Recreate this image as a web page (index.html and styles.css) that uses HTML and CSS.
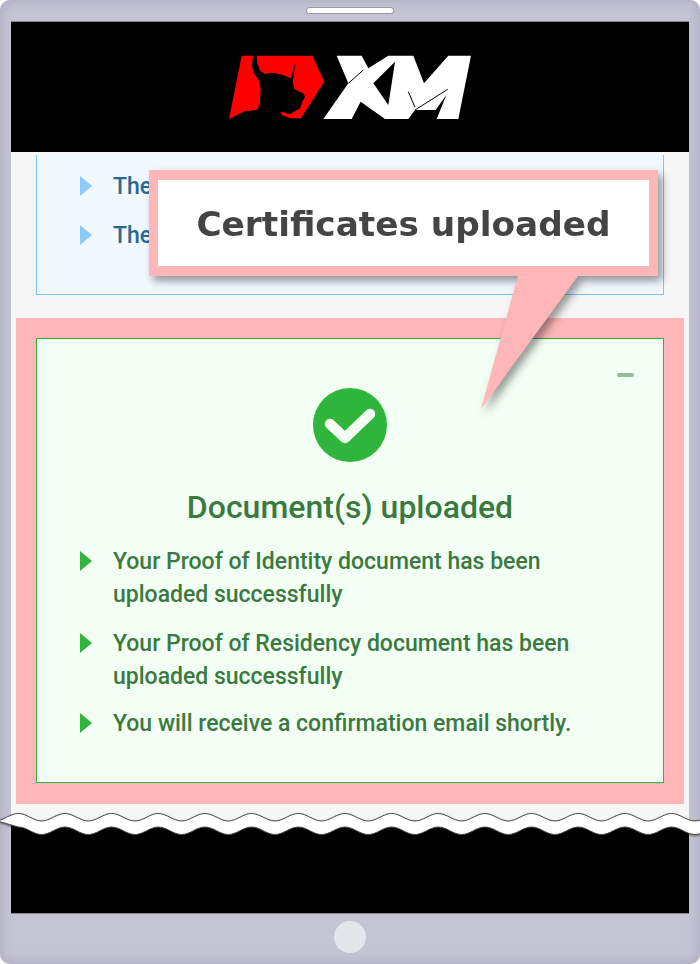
FILE: index.html

```html
<!DOCTYPE html>
<html lang="en">
<head>
  <meta charset="UTF-8">
  <meta name="viewport" content="width=device-width, initial-scale=1.0">
  <title>XM - Certificates uploaded</title>
  <link rel="stylesheet" href="styles.css">
</head>
<body>
  <div class="device">
    <div class="device-top"><span class="slot"></span></div>

    <div class="screen">
      <header class="site-header">
        <svg class="logo" viewBox="0 0 753 222" width="251" height="74">
          <!-- bull -->
          <path fill="#ff0000" d="M50 17L85 17L80 45L85 65L100 90L107 115L105 160L98 178L80 182L62 182L12 207Z"/>
          <path fill="#ff0000" d="M95 17L262 17L298 95L228 205L195 205L170 195L166 185L195 192L225 175L232 155L240 140L235 130L208 118L203 95L212 38L205 55L198 85L165 72L140 68L120 72L105 62L97 40Z"/>
          <!-- XM -->
          <path fill="#fff" d="M335 17L410 17L430 55L490 17L565 17L597 100L670 17L738 17L700 207L635 207L664 135L632 180L570 180L550 207L480 207L407 155L380 207L295 207L370 100Z"/>
          <path fill="#000" d="M510 35L490 165L445 100Z"/>
          <path stroke="#000" stroke-width="3" fill="none" d="M415 60L370 100M570 180L668 118M550 125L570 172"/>
        </svg>
      </header>

      <main class="content">
        <div class="notice notice-blue">
          <ul class="bullets">
            <li>The</li>
            <li>The</li>
          </ul>
        </div>

        <div class="highlight">
          <div class="notice notice-green">
            <span class="collapse"></span>
            <svg class="check" viewBox="0 0 74 74" width="74" height="74">
              <circle cx="37" cy="37" r="37" fill="#2fb53b"/>
              <path d="M17 36L32 50L57 26" fill="none" stroke="#f3fff5" stroke-width="10.5" stroke-linecap="round" stroke-linejoin="round"/>
            </svg>
            <h2>Document(s) uploaded</h2>
            <ul class="bullets">
              <li>Your Proof of Identity document has been uploaded successfully</li>
              <li>Your Proof of Residency document has been uploaded successfully</li>
              <li>You will receive a confirmation email shortly.</li>
            </ul>
          </div>
        </div>
      </main>

      <div class="screen-bottom"></div>

      <div class="callout">
        <div class="callout-box">Certificates uploaded</div>
        <svg class="callout-tail" viewBox="0 0 97 133" width="97" height="133">
          <path d="M37 0L97 0L0 133Z" fill="#ffb6b9"/>
        </svg>
      </div>
    </div>

    <div class="device-bottom"><span class="home-btn"></span></div>

    <svg class="tear" viewBox="0 0 700 30" width="700" height="30">
      <path d="M-28.33 5.5c8 0 15 7.5 23.33 7.5s15-7.5 23.33-7.5s15 7.5 23.33 7.5s15-7.5 23.33-7.5s15 7.5 23.33 7.5s15-7.5 23.33-7.5s15 7.5 23.33 7.5s15-7.5 23.33-7.5s15 7.5 23.33 7.5s15-7.5 23.33-7.5s15 7.5 23.33 7.5s15-7.5 23.33-7.5s15 7.5 23.33 7.5s15-7.5 23.33-7.5s15 7.5 23.33 7.5s15-7.5 23.33-7.5s15 7.5 23.33 7.5s15-7.5 23.33-7.5s15 7.5 23.33 7.5s15-7.5 23.33-7.5s15 7.5 23.33 7.5s15-7.5 23.33-7.5s15 7.5 23.33 7.5s15-7.5 23.33-7.5s15 7.5 23.33 7.5s15-7.5 23.33-7.5s15 7.5 23.33 7.5s15-7.5 23.33-7.5s15 7.5 23.33 7.5s15-7.5 23.33-7.5s15 7.5 23.33 7.5s15-7.5 23.33-7.5l0 13.5c-8 0-15 7.5-23.33 7.5s-15-7.5-23.33-7.5s-15 7.5-23.33 7.5s-15-7.5-23.33-7.5s-15 7.5-23.33 7.5s-15-7.5-23.33-7.5s-15 7.5-23.33 7.5s-15-7.5-23.33-7.5s-15 7.5-23.33 7.5s-15-7.5-23.33-7.5s-15 7.5-23.33 7.5s-15-7.5-23.33-7.5s-15 7.5-23.33 7.5s-15-7.5-23.33-7.5s-15 7.5-23.33 7.5s-15-7.5-23.33-7.5s-15 7.5-23.33 7.5s-15-7.5-23.33-7.5s-15 7.5-23.33 7.5s-15-7.5-23.33-7.5s-15 7.5-23.33 7.5s-15-7.5-23.33-7.5s-15 7.5-23.33 7.5s-15-7.5-23.33-7.5s-15 7.5-23.33 7.5s-15-7.5-23.33-7.5s-15 7.5-23.33 7.5s-15-7.5-23.33-7.5s-15 7.5-23.33 7.5s-15-7.5-23.33-7.5z" fill="#fff" stroke="#4a4a4a" stroke-width="1"/>
    </svg>
  </div>
</body>
</html>
```

FILE: styles.css

```css
body {
  margin: 0;
  background: #fff;
  font-family: Roboto, "Noto Sans", sans-serif;
}
ul {
  list-style: none;
  margin: 0;
  padding: 0;
}

/* tablet frame */
.device {
  position: relative;
  display: flex;
  flex-direction: column;
  width: 700px;
  height: 964px;
  padding: 0 11px;
  box-sizing: border-box;
  overflow: hidden;
  border-radius: 10px;
  background: #c5c4d4;
  box-shadow: inset 0 0 14px #a9a8bc;
}
.device-top {
  flex: none;
  height: 22px;
  display: flex;
  justify-content: center;
  padding-top: 8px;
  box-sizing: border-box;
}
.slot {
  width: 86px;
  height: 5px;
  border-radius: 3px;
  background: #fff;
  box-shadow: 0 0 0 1px #9b9aa8;
}
.device-bottom {
  flex: none;
  height: 51px;
  display: flex;
  justify-content: center;
  padding-top: 8px;
  box-sizing: border-box;
}
.home-btn {
  width: 32px;
  height: 32px;
  border-radius: 50%;
  background: #e4e6ec;
}

.screen {
  position: relative;
  flex: 1;
  display: flex;
  flex-direction: column;
  box-shadow: 0 -1px 0 #85858f, 0 1px 0 #85858f;
}
.site-header {
  flex: none;
  height: 130px;
  display: flex;
  justify-content: center;
  align-items: flex-start;
  padding-top: 28px;
  box-sizing: border-box;
  background: #000;
}
.logo {
  display: block;
  margin-left: 1px;
}
.content {
  flex: none;
  height: 672px;
  box-sizing: border-box;
  padding: 3px 5px 0;
  background: #f6f6f6;
}
.screen-bottom {
  flex: 1;
  background: #000;
}

/* boxes */
.notice {
  border: 1px solid;
  font-size: 23px;
  font-weight: 500;
  line-height: 33px;
}
.notice-blue {
  margin: 0 20px 23px;
  height: 140px;
  box-sizing: border-box;
  padding: 15px 0 0 43px;
  border-color: #7cc4ff;
  border-top: 0;
  background: #f1f9ff;
  color: #2b6a8e;
}
.highlight {
  height: 486px;
  padding: 20px;
  box-sizing: border-box;
  background: #ffb6b9;
}
.notice-green {
  height: 445px;
  box-sizing: border-box;
  padding-top: 34px;
  border-color: #2bb537;
  background: #f3fff5;
  color: #3a7a3f;
  text-align: center;
}
.collapse {
  display: block;
  width: 17px;
  height: 4px;
  margin: 0 29px 11px auto;
  border-radius: 2px;
  background: #96bb98;
}
.check {
  display: block;
  margin: 0 auto;
}
.notice-green h2 {
  margin: 25px 0 18px;
  font-size: 32px;
  font-weight: 500;
  line-height: 40px;
}
.notice-green .bullets {
  padding-left: 43px;
}
.notice-green .bullets li:last-child {
  margin-top: -2px;
}
.bullets {
  text-align: left;
}
.bullets li {
  position: relative;
  padding-left: 33px;
  margin-bottom: 16px;
  max-width: 470px;
}
.bullets li::before {
  content: "";
  position: absolute;
  left: 0;
  top: 6px;
  border-left: 12px solid #2fb53b;
  border-top: 10.5px solid transparent;
  border-bottom: 10.5px solid transparent;
}
.notice-blue .bullets li::before {
  border-left-color: #8ccbff;
}

/* callout over the page */
.callout {
  position: absolute;
  left: 138px;
  top: 148px;
  width: 509px;
  filter: drop-shadow(4px 5px 4px rgba(0, 0, 0, 0.4));
}
.callout-box {
  height: 106px;
  box-sizing: border-box;
  border: solid #ffb6b9;
  border-width: 10px 9px;
  background: #fff;
  font-family: "DejaVu Sans", sans-serif;
  font-size: 34.3px;
  font-weight: bold;
  line-height: 89px;
  text-align: center;
  color: #444;
}
.callout-tail {
  display: block;
  margin-left: 332px;
}

/* torn edge across the picture */
.tear {
  position: absolute;
  left: 0;
  top: 808px;
  filter: drop-shadow(0 1px 1px rgba(0, 0, 0, 0.5));
}
```
